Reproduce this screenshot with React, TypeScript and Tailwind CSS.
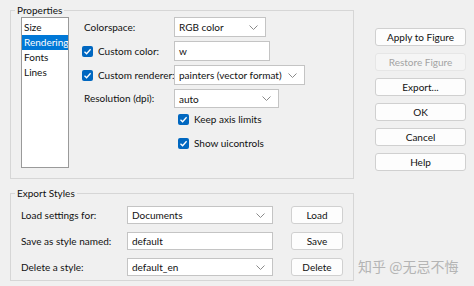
import { ReactNode } from "react";

const font = { fontFamily: 'Lato, "Noto Sans", sans-serif' };

function Chevron() {
  return (
    <svg width="9" height="5" viewBox="0 0 9 5" className="shrink-0">
      <polyline points="0.5,0.5 4.5,4.5 8.5,0.5" fill="none" stroke="#8a8a8a" strokeWidth="1" />
    </svg>
  );
}

function Select({ value, w, h = "h-[20px]" }: { value: string; w: string; h?: string }) {
  return (
    <div className={`${w} ${h} flex items-center justify-between border border-[#c4c4c4] bg-white pl-[4px] pr-[7px] shrink-0`}>
      <span className="leading-none">{value}</span>
      <Chevron />
    </div>
  );
}

function TextBox({ value, w, h = "h-[20px]" }: { value: string; w: string; h?: string }) {
  return (
    <div className={`${w} ${h} flex items-center border border-[#c4c4c4] bg-white pl-[4px] shrink-0`}>
      <span className="leading-none">{value}</span>
    </div>
  );
}

function Check({ children }: { children: ReactNode }) {
  return (
    <div className="flex items-center gap-[5px] h-[14px]">
      <div className="w-[11px] h-[11px] rounded-[2px] bg-[#0067c0] flex items-center justify-center shrink-0">
        <svg width="9" height="9" viewBox="0 0 9 9">
          <polyline points="1.5,4.8 3.6,6.8 7.6,2.2" fill="none" stroke="white" strokeWidth="1.3" />
        </svg>
      </div>
      <span>{children}</span>
    </div>
  );
}

function Btn({ children, w = "w-[91px]", disabled }: { children: ReactNode; w?: string; disabled?: boolean }) {
  return (
    <div
      className={`${w} h-[18px] rounded-[3px] border flex items-center justify-center leading-none ${
        disabled ? "border-[#e6e6e6] bg-[#f5f5f5] text-[#a3a3a3]" : "border-[#d0d0d0] bg-[#fdfdfd]"
      }`}
    >
      {children}
    </div>
  );
}

function Group({ title, className, children }: { title: string; className: string; children: ReactNode }) {
  return (
    <div className={`relative border border-[#d6d6d6] ${className}`}>
      <span className="absolute left-[4px] top-[-8px] px-[2px] bg-[#f0f0f0] leading-[14px]">{title}</span>
      {children}
    </div>
  );
}

export default function App() {
  return (
    <div className="w-[474px] h-[286px] bg-[#f0f0f0] text-[10px] text-[#111111] pt-[10px] pl-[10px] overflow-hidden whitespace-nowrap" style={font}>
      <div className="flex">
        <Group title="Properties" className="w-[344px] h-[169px] pt-[6px] pl-[10px] flex">
          <div className="w-[48px] h-[151px] border border-[#9a9a9a] bg-white pt-[2px] overflow-hidden">
            <div className="h-[15px] leading-[15px] pl-[2px]">Size</div>
            <div className="h-[15px] leading-[15px] pl-[2px] bg-[#0078d7] text-white">Rendering</div>
            <div className="h-[15px] leading-[15px] pl-[2px]">Fonts</div>
            <div className="h-[15px] leading-[15px] pl-[2px]">Lines</div>
          </div>
          <div className="ml-[13px] flex flex-col">
            <div className="flex flex-col gap-[4px]">
              <div className="flex items-center">
                <span className="w-[92px] pl-[2px]">Colorspace:</span>
                <Select value="RGB color" w="w-[92px]" />
              </div>
              <div className="flex items-center">
                <div className="w-[92px]"><Check>Custom color:</Check></div>
                <TextBox value="w" w="w-[96px]" />
              </div>
              <div className="flex items-center">
                <div className="w-[92px]"><Check>Custom renderer:</Check></div>
                <Select value="painters (vector format)" w="w-[131px]" />
              </div>
              <div className="flex items-center">
                <span className="w-[92px] pl-[2px]">Resolution (dpi):</span>
                <Select value="auto" w="w-[105px]" h="h-[19px]" />
              </div>
            </div>
            <div className="ml-[96px] mt-[4px] flex flex-col gap-[10px]">
              <Check>Keep axis limits</Check>
              <Check>Show uicontrols</Check>
            </div>
          </div>
        </Group>
        <div className="ml-[21px] mt-[18px] flex flex-col gap-[7px]">
          <Btn>Apply to Figure</Btn>
          <Btn disabled>Restore Figure</Btn>
          <Btn>Export...</Btn>
          <Btn>OK</Btn>
          <Btn>Cancel</Btn>
          <Btn>Help</Btn>
        </div>
      </div>
      <div className="flex mt-[14px]">
        <Group title="Export Styles" className="w-[344px] h-[88px] pt-[12px] pl-[10px]">
          <div className="flex flex-col gap-[8px]">
            {[
              ["Load settings for:", "Documents", true, "Load"],
              ["Save as style named:", "default", false, "Save"],
              ["Delete a style:", "default_en", true, "Delete"],
            ].map(([label, value, isSelect, btn]) => (
              <div key={label as string} className="flex items-center">
                <span className="w-[106px]">{label}</span>
                {isSelect ? (
                  <Select value={value as string} w="w-[146px]" h="h-[18px]" />
                ) : (
                  <TextBox value={value as string} w="w-[146px]" h="h-[18px]" />
                )}
                <div className="ml-[18px]">
                  <Btn w="w-[52px]">{btn}</Btn>
                </div>
              </div>
            ))}
          </div>
        </Group>
        <div
          className="self-end mb-[8px] ml-[4px] text-[14px] text-[#b4b4b4] leading-none"
          style={{ fontFamily: '"Noto Sans CJK SC", "Noto Sans", sans-serif' }}
        >
          知乎 @无忌不悔
        </div>
      </div>
    </div>
  );
}
